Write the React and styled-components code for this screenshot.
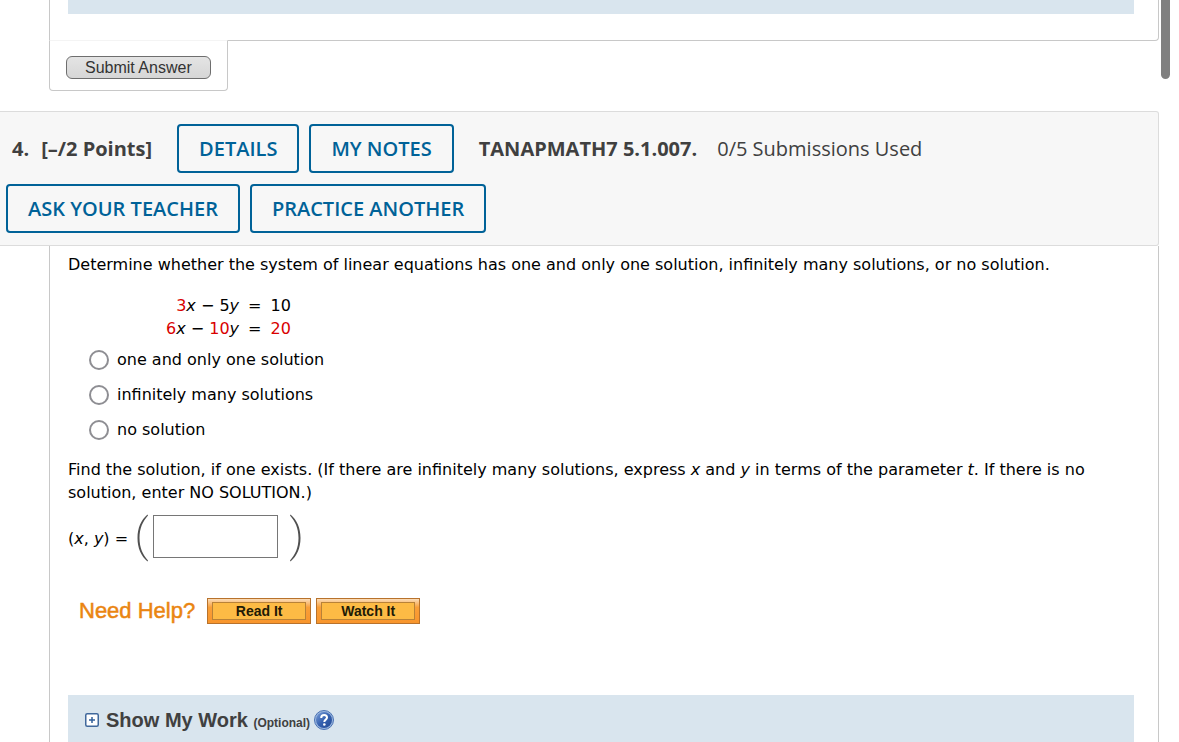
import React, { useState } from "react";
import styled, { createGlobalStyle } from "styled-components";

const GlobalStyle = createGlobalStyle`
  * {
    box-sizing: border-box;
  }

  body {
    margin: 0;
    background-color: #fff;
    color: #000;
    font-family: Verdana, "DejaVu Sans", sans-serif;
    font-size: 16px;
  }
`;

const Page = styled.main`
  display: flex;
  flex-direction: column;
  min-height: 100vh;
  padding-right: 20px;
`;

const ScrollThumb = styled.div`
  position: absolute;
  top: 0;
  right: 9px;
  width: 9px;
  height: 79px;
  border-radius: 0 0 5px 5px;
  background-color: #808080;
`;

const PreviousQuestion = styled.section`
  margin-left: 49px;
  margin-bottom: 20px;
`;

const PreviousBody = styled.div`
  height: 41px;
  padding: 0 24px 0 18px;
  border: 1px solid #c8c8c8;
  border-top: none;
  border-radius: 0 0 4px 0;
`;

const PreviousWork = styled.div`
  height: 14px;
  background-color: #d9e5ee;
`;

const SubmitTab = styled.div`
  position: relative;
  width: fit-content;
  margin-top: -1px;
  padding: 15px 16px 11px 16px;
  border: 1px solid #c8c8c8;
  border-top-color: #f4f4f4;
  border-radius: 0 0 4px 4px;
  background-color: #fff;
`;

const SubmitButton = styled.button`
  display: block;
  height: 23px;
  padding: 0 18px;
  border: 1px solid #6e6e6e;
  border-radius: 6px;
  background: linear-gradient(#e4e4e4, #d6d6d6);
  color: #333;
  font-family: Arial, "Liberation Sans", sans-serif;
  font-size: 16px;
  line-height: 21px;
`;

const QuestionHeader = styled.header`
  display: flex;
  flex-direction: column;
  gap: 11px;
  padding: 12px 6px;
  border: 1px solid #dcdcdc;
  border-left: none;
  border-radius: 0 3px 3px 0;
  background-color: #f7f7f7;
  color: #404040;
  font-family: "Open Sans", sans-serif;
  font-size: 20px;
`;

const HeaderRow = styled.div`
  display: flex;
  align-items: center;
  gap: 10px;
`;

const Points = styled.h2`
  display: flex;
  gap: 12px;
  margin: 0 15px 0 6px;
  font-size: 20px;
  font-weight: 700;
`;

const QuestionName = styled.strong`
  margin-left: 15px;
  font-weight: 700;
`;

const Submissions = styled.span`
  margin-left: 10px;
`;

const HeaderButton = styled.button`
  height: 49px;
  padding: 0 20px;
  border: 2px solid #006298;
  border-radius: 4px;
  background-color: transparent;
  color: #006298;
  font-family: inherit;
  font-size: 20px;
  font-weight: 600;
`;

const QuestionBody = styled.section`
  display: flex;
  flex: 1;
  flex-direction: column;
  margin-left: 49px;
  padding: 7px 24px 0 18px;
  border: solid #c8c8c8;
  border-width: 0 1px;
`;

const Text = styled.p`
  margin: 0;
  line-height: 23px;
`;

const Equations = styled.table`
  width: fit-content;
  margin: 18px 0 0 98px;
  border-collapse: collapse;

  td {
    padding: 0;
    line-height: 23px;
    text-align: right;
  }

  td:nth-child(2) {
    padding: 0 9px;
  }
`;

const Red = styled.span`
  color: #d90000;
`;

const Choices = styled.fieldset`
  display: flex;
  flex-direction: column;
  gap: 12px;
  margin: 8px 0 17px 21px;
  padding: 0;
  border: none;
`;

const Choice = styled.label`
  display: flex;
  align-items: center;
  gap: 8px;
  line-height: 23px;
`;

const Radio = styled.input`
  appearance: none;
  width: 20px;
  height: 20px;
  margin: 0;
  border: 2px solid #8e8e93;
  border-radius: 50%;
  background-color: #fff;

  &:checked {
    box-shadow: inset 0 0 0 4px #fff;
    background-color: #006298;
  }
`;

const Answer = styled.div`
  display: flex;
  align-items: center;
  margin-top: 10px;
`;

const AnswerLabel = styled.label`
  margin-right: 9px;
`;

const AnswerInput = styled.input`
  width: 125px;
  height: 43px;
  margin: 0 12px 4px 5px;
  padding: 4px 8px;
  border: 1px solid #767676;
  font-family: inherit;
  font-size: 16px;
`;

const Help = styled.div`
  display: flex;
  align-items: center;
  gap: 5px;
  margin: 36px 0 71px 11px;
  font-family: Arial, "Liberation Sans", sans-serif;
`;

const HelpTitle = styled.span`
  margin-right: 7px;
  color: #ea8511;
  font-size: 22px;
  line-height: 24px;
  -webkit-text-stroke: 0.5px #ea8511;
`;

const HelpButton = styled.button`
  width: 104px;
  height: 26px;
  padding: 3px 4px;
  border: 1px solid #b8722c;
  background: linear-gradient(#fbdcb8, #f99f38 35%, #f8952c);
  font-family: inherit;
`;

const HelpLabel = styled.span`
  display: block;
  border: 1px solid #b98237;
  background-color: #fdbb45;
  color: #211a05;
  font-size: 14px;
  font-weight: 700;
  line-height: 16px;
`;

const Work = styled.div`
  display: flex;
  flex: 1;
  align-items: flex-start;
  min-height: 47px;
  padding: 13px 17px 10px;
  background-color: #d9e5ee;
  color: #404040;
  font-family: Arial, "Liberation Sans", sans-serif;
`;

const IconButton = styled.button`
  display: flex;
  align-items: center;
  height: 24px;
  padding: 0;
  border: none;
  background: none;
`;

const WorkTitle = styled.h3`
  margin: 0 4px 0 7px;
  font-size: 20px;
  line-height: 24px;

  small {
    font-size: 12px;
  }
`;

const Paren = ({ right }) => (
  <svg width="11" height="48" viewBox="0 0 11 48" fill="#505050">
    <path
      d={
        right
          ? "M.5 .5C7 6 10.500 14 10.500 24S7 42 .5 47.500L0 46.500C5 41 8.500 34 8.500 24S5 7 0 1.500Z"
          : "M10.500 .5C4 6 .5 14 .5 24S4 42 10.500 47.500L11 46.500C6 41 2.500 34 2.500 24S6 7 11 1.500Z"
      }
    />
  </svg>
);

const PlusIcon = () => (
  <svg width="14" height="14" viewBox="0 0 14 14">
    <rect x=".75" y=".75" width="12.500" height="12.500" rx="1.500" fill="#fff" stroke="#40689c" strokeWidth="1.500" />
    <path d="M4 7h6M7 4v6" stroke="#315f99" strokeWidth="1.500" />
  </svg>
);

const HelpIcon = () => (
  <svg width="20" height="20" viewBox="0 0 20 20">
    <defs>
      <linearGradient id="helpFill" x1="0" y1="0" x2="1" y2="1">
        <stop offset="0" stopColor="#7b9fd8" />
        <stop offset=".5" stopColor="#3561b0" />
        <stop offset="1" stopColor="#244a94" />
      </linearGradient>
    </defs>
    <circle cx="10" cy="10" r="9.500" fill="#9db8de" stroke="#4a72b4" />
    <circle cx="10" cy="10" r="8" fill="url(#helpFill)" />
    <path
      d="M7.200 8C7.200 6 8.300 5 10.100 5S13 6 13 7.600C13 9.700 10.300 9.600 10.300 12"
      fill="none"
      stroke="#fff"
      strokeWidth="2"
    />
    <circle cx="10.300" cy="14.500" r="1.300" fill="#fff" />
  </svg>
);

const choices = [
  "one and only one solution",
  "infinitely many solutions",
  "no solution",
];

const App = () => {
  const [choice, setChoice] = useState("");
  const [answer, setAnswer] = useState("");

  return (
    <>
      <GlobalStyle />
      <Page>
        <PreviousQuestion>
          <PreviousBody>
            <PreviousWork />
          </PreviousBody>
          <SubmitTab>
            <SubmitButton type="button">Submit Answer</SubmitButton>
          </SubmitTab>
        </PreviousQuestion>

        <QuestionHeader>
          <HeaderRow>
            <Points>
              <span>4.</span>
              <span>[–/2 Points]</span>
            </Points>
            <HeaderButton type="button">DETAILS</HeaderButton>
            <HeaderButton type="button">MY NOTES</HeaderButton>
            <QuestionName>TANAPMATH7 5.1.007.</QuestionName>
            <Submissions>0/5 Submissions Used</Submissions>
          </HeaderRow>
          <HeaderRow>
            <HeaderButton type="button">ASK YOUR TEACHER</HeaderButton>
            <HeaderButton type="button">PRACTICE ANOTHER</HeaderButton>
          </HeaderRow>
        </QuestionHeader>

        <QuestionBody>
          <Text>
            Determine whether the system of linear equations has one and only
            one solution, infinitely many solutions, or no solution.
          </Text>
          <Equations>
            <tbody>
              <tr>
                <td>
                  <Red>3</Red>
                  <i>x</i> − 5<i>y</i>
                </td>
                <td>=</td>
                <td>10</td>
              </tr>
              <tr>
                <td>
                  <Red>6</Red>
                  <i>x</i> − <Red>10</Red>
                  <i>y</i>
                </td>
                <td>=</td>
                <td>
                  <Red>20</Red>
                </td>
              </tr>
            </tbody>
          </Equations>
          <Choices>
            {choices.map((label) => (
              <Choice key={label}>
                <Radio
                  type="radio"
                  name="choice"
                  value={label}
                  checked={choice === label}
                  onChange={(event) => setChoice(event.target.value)}
                />
                {label}
              </Choice>
            ))}
          </Choices>
          <Text>
            Find the solution, if one exists. (If there are infinitely many
            solutions, express <i>x</i> and <i>y</i> in terms of the parameter{" "}
            <i>t</i>. If there is no solution, enter NO SOLUTION.)
          </Text>
          <Answer>
            <AnswerLabel htmlFor="answer">
              (<i>x</i>, <i>y</i>) =
            </AnswerLabel>
            <Paren />
            <AnswerInput
              id="answer"
              type="text"
              value={answer}
              onChange={(event) => setAnswer(event.target.value)}
            />
            <Paren right />
          </Answer>
          <Help>
            <HelpTitle>Need Help?</HelpTitle>
            <HelpButton type="button">
              <HelpLabel>Read It</HelpLabel>
            </HelpButton>
            <HelpButton type="button">
              <HelpLabel>Watch It</HelpLabel>
            </HelpButton>
          </Help>
          <Work>
            <IconButton type="button" aria-label="Show My Work">
              <PlusIcon />
            </IconButton>
            <WorkTitle>
              Show My Work <small>(Optional)</small>
            </WorkTitle>
            <IconButton type="button" aria-label="Help">
              <HelpIcon />
            </IconButton>
          </Work>
        </QuestionBody>
      </Page>
      <ScrollThumb />
    </>
  );
};

export default App;
